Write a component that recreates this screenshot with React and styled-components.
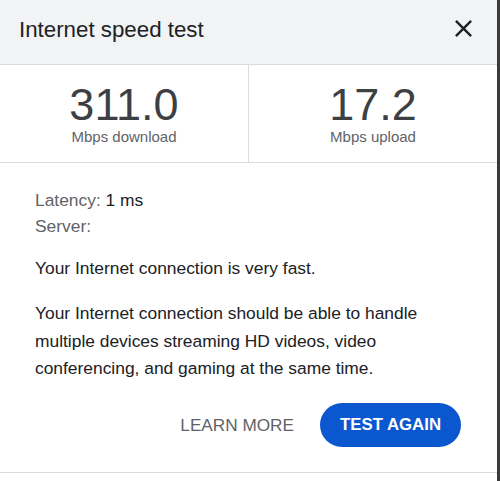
import React from 'react';
import styled, { createGlobalStyle } from 'styled-components';

const GlobalStyle = createGlobalStyle`
  html, body {
    margin: 0;
    padding: 0;
    background: #3a3a3a;
    font-family: "Liberation Sans", Arial, sans-serif;
  }
`;

const Card = styled.div`
  width: 497px;
  height: 481px;
  background: #fff;
  overflow: hidden;
`;

const Header = styled.div`
  height: 65px;
  box-sizing: border-box;
  display: flex;
  justify-content: space-between;
  align-items: flex-start;
  padding: 0 19px;
  background: #f1f3f4;
  border-bottom: 1px solid #dadce0;
`;

const Title = styled.h1`
  margin: 16px 0 0;
  font-size: 22.3px;
  line-height: 28px;
  font-weight: normal;
  color: #202124;
`;

const CloseButton = styled.button`
  margin-top: 14px;
  padding: 0;
  border: none;
  background: none;
  width: 29px;
  height: 29px;
  color: #202124;
  cursor: pointer;
  svg {
    display: block;
  }
`;

const Stats = styled.div`
  display: grid;
  grid-template-columns: 248px 1fr;
  height: 98px;
  box-sizing: border-box;
  border-bottom: 1px solid #dadce0;
`;

const Stat = styled.div`
  display: flex;
  flex-direction: column;
  align-items: center;
  padding-top: 16.5px;
  border-left: ${(p) => (p.divider ? '1px solid #dadce0' : 'none')};
`;

const Value = styled.div`
  font-size: 45px;
  line-height: 46px;
  color: #3c4043;
`;

const Unit = styled.div`
  margin-top: 1.3px;
  font-size: 15px;
  line-height: 16px;
  color: #5f6368;
`;

const Body = styled.div`
  box-sizing: border-box;
  height: 310px;
  padding: 25px 36px 0 35px;
  font-size: 17.4px;
  color: #202124;
  border-bottom: 1px solid #dadce0;
`;

const InfoLine = styled.div`
  line-height: 25.5px;
  span {
    color: #5f6368;
  }
`;

const Text = styled.p`
  margin: ${(p) => p.gap}px 0 0;
  line-height: 27.5px;
`;

const Actions = styled.div`
  display: flex;
  justify-content: flex-end;
  align-items: center;
  gap: 26px;
  margin-top: 20.5px;
`;

const LinkButton = styled.button`
  padding: 0;
  border: none;
  background: none;
  font-family: inherit;
  font-size: 17.2px;
  color: #5f6368;
  cursor: pointer;
`;

const PrimaryButton = styled.button`
  height: 44px;
  padding: 0 20px;
  border: none;
  border-radius: 22px;
  background: #0b57d0;
  color: #fff;
  font-family: inherit;
  font-size: 16.8px;
  font-weight: bold;
  cursor: pointer;
`;

function CloseIcon() {
  return (
    <svg width="29" height="29" viewBox="0 0 24 24" fill="currentColor">
      <path d="M19 6.41L17.59 5 12 10.59 6.41 5 5 6.41 10.59 12 5 17.59 6.41 19 12 13.41 17.59 19 19 17.59 13.41 12z" />
    </svg>
  );
}

export default function App() {
  return (
    <>
      <GlobalStyle />
      <Card>
        <Header>
          <Title>Internet speed test</Title>
          <CloseButton aria-label="Close">
            <CloseIcon />
          </CloseButton>
        </Header>
        <Stats>
          <Stat>
            <Value>311.0</Value>
            <Unit>Mbps download</Unit>
          </Stat>
          <Stat divider>
            <Value>17.2</Value>
            <Unit>Mbps upload</Unit>
          </Stat>
        </Stats>
        <Body>
          <InfoLine>
            <span>Latency:</span> 1 ms
          </InfoLine>
          <InfoLine>
            <span>Server:</span>
          </InfoLine>
          <Text gap={16}>Your Internet connection is very fast.</Text>
          <Text gap={17.5}>
            Your Internet connection should be able to handle multiple devices
            streaming HD videos, video conferencing, and gaming at the same time.
          </Text>
          <Actions>
            <LinkButton>LEARN MORE</LinkButton>
            <PrimaryButton>TEST AGAIN</PrimaryButton>
          </Actions>
        </Body>
      </Card>
    </>
  );
}
